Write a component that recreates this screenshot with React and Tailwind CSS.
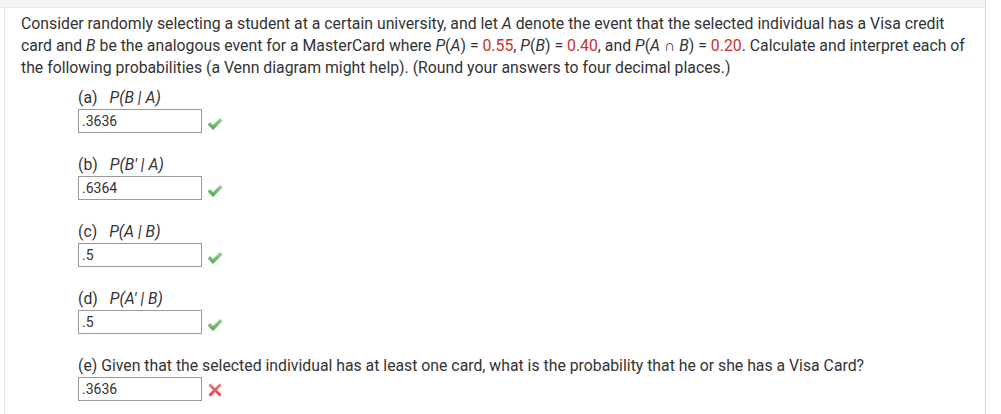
import React from 'react'

function Check() {
  return (
    <svg viewBox="0 0 16 14" className="w-[16px] h-[14px] ml-[5px] mt-[8px]">
      <defs>
        <linearGradient id="gchk" x1="0" y1="0" x2="0" y2="1">
          <stop offset="0" stopColor="#9ad596" />
          <stop offset="1" stopColor="#55a54f" />
        </linearGradient>
      </defs>
      <path d="M0.5 7.5 L3 5 L6 8 L13 1 L15.5 3.5 L6 13 Z" fill="url(#gchk)" />
    </svg>
  )
}

function Cross() {
  return (
    <svg viewBox="0 0 14 14" className="w-[14px] h-[14px] ml-[6px] mt-[6px]">
      <defs>
        <linearGradient id="gx" x1="0" y1="0" x2="0" y2="1">
          <stop offset="0" stopColor="#f27a7a" />
          <stop offset="1" stopColor="#d84444" />
        </linearGradient>
      </defs>
      <path d="M2.5 0.5 L7 5 L11.5 0.5 L13.5 2.5 L9 7 L13.5 11.5 L11.5 13.5 L7 9 L2.5 13.5 L0.5 11.5 L5 7 L0.5 2.5 Z" fill="url(#gx)" />
    </svg>
  )
}

const I = ({ children }) => <i className="italic">{children}</i>
const R = ({ children }) => <span className="text-[#c9302c]">{children}</span>

function Answer({ value, ok }) {
  return (
    <div className="flex items-start">
      <div className="w-[124px] h-[24px] border border-[#9a9a9a] pl-[3px] text-[14px] leading-[22px] text-[#333]">
        {value}
      </div>
      {ok ? <Check /> : <Cross />}
    </div>
  )
}

function Part({ letter, label, value, ok }) {
  return (
    <div className="mb-[21px]">
      <div className="leading-[22px]">
        ({letter})<span className="inline-block w-[12px]" />
        {label}
      </div>
      <Answer value={value} ok={ok} />
    </div>
  )
}

export default function App() {
  return (
    <div className="w-[1001px] h-[414px] bg-white overflow-hidden text-[#333] text-[15.8px]" style={{ fontFamily: 'Roboto, "Liberation Sans", sans-serif' }}>
      <div className="w-[986px] h-full border-r border-[#d9d9d9]">
        <div className="h-[8px] bg-[#f3f3f3] border-b border-[#e8e8e8]" />
        <div className="ml-[4px] h-full border-l border-[#e6e6e6] pl-[16px] pt-[5px]">
          <p className="w-[950px] leading-[22px]">
            Consider randomly selecting a student at a certain university, and let <I>A</I> denote the event that the selected individual has a Visa credit card and <I>B</I> be the analogous event for a MasterCard where <I>P</I>(<I>A</I>) = <R>0.55</R>, <I>P</I>(<I>B</I>) = <R>0.40</R>, and <I>P</I>(<I>A</I> ∩ <I>B</I>) = <R>0.20</R>. Calculate and interpret each of the following probabilities (a Venn diagram might help). (Round your answers to four decimal places.)
          </p>
          <div className="ml-[57px] mt-[8px]">
            <Part letter="a" label={<I>P(B | A)</I>} value=".3636" ok />
            <Part letter="b" label={<I>P(B' | A)</I>} value=".6364" ok />
            <Part letter="c" label={<I>P(A | B)</I>} value=".5" ok />
            <Part letter="d" label={<I>P(A' | B)</I>} value=".5" ok />
            <div>
              <div className="leading-[22px]">
                (e) Given that the selected individual has at least one card, what is the probability that he or she has a Visa Card?
              </div>
              <Answer value=".3636" />
            </div>
          </div>
        </div>
      </div>
    </div>
  )
}
